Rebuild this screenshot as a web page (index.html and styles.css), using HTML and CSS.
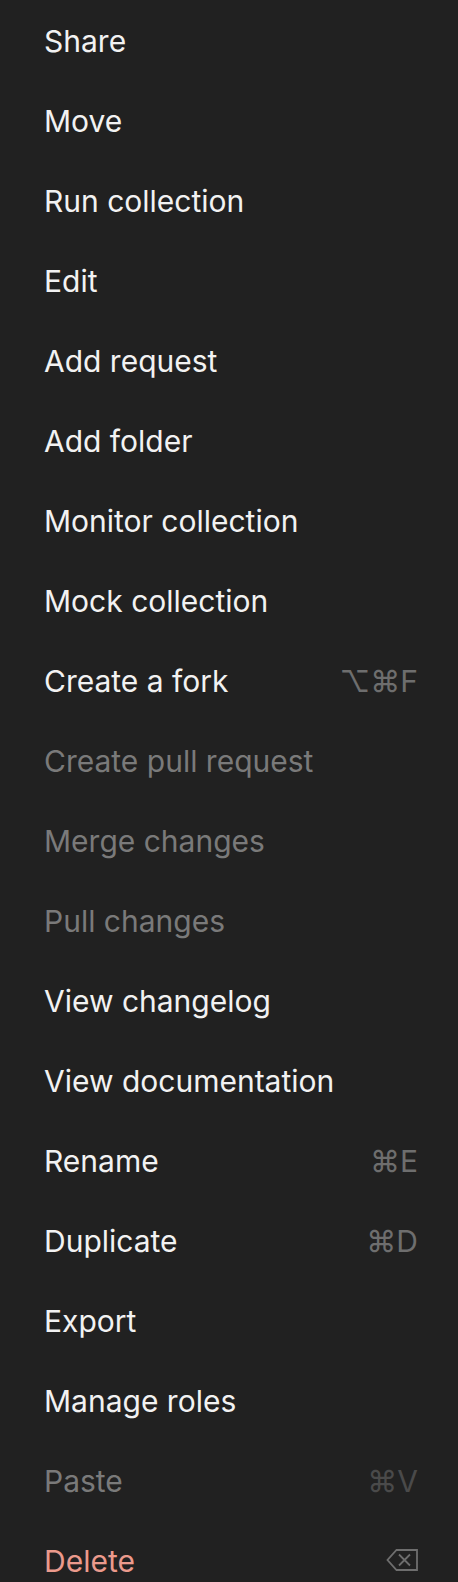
FILE: index.html
```html
<!DOCTYPE html>
<html lang="en">
<head>
  <meta charset="UTF-8">
  <meta name="viewport" content="width=device-width, initial-scale=1.0">
  <title>Collection menu</title>
  <link rel="stylesheet" href="styles.css">
</head>
<body>
  <ul class="menu">
    <li class="menu-item"><span class="label">Share</span></li>
    <li class="menu-item"><span class="label">Move</span></li>
    <li class="menu-item"><span class="label">Run collection</span></li>
    <li class="menu-item"><span class="label">Edit</span></li>
    <li class="menu-item"><span class="label">Add request</span></li>
    <li class="menu-item"><span class="label">Add folder</span></li>
    <li class="menu-item"><span class="label">Monitor collection</span></li>
    <li class="menu-item"><span class="label">Mock collection</span></li>
    <li class="menu-item"><span class="label">Create a fork</span><span class="shortcut">⌥⌘F</span></li>
    <li class="menu-item disabled"><span class="label">Create pull request</span></li>
    <li class="menu-item disabled"><span class="label">Merge changes</span></li>
    <li class="menu-item disabled"><span class="label">Pull changes</span></li>
    <li class="menu-item"><span class="label">View changelog</span></li>
    <li class="menu-item"><span class="label">View documentation</span></li>
    <li class="menu-item"><span class="label">Rename</span><span class="shortcut">⌘E</span></li>
    <li class="menu-item"><span class="label">Duplicate</span><span class="shortcut">⌘D</span></li>
    <li class="menu-item"><span class="label">Export</span></li>
    <li class="menu-item"><span class="label">Manage roles</span></li>
    <li class="menu-item disabled"><span class="label">Paste</span><span class="shortcut">⌘V</span></li>
    <li class="menu-item danger">
      <span class="label">Delete</span>
      <!-- backspace key -->
      <svg class="shortcut-icon" width="32" height="24" viewBox="0 0 32 24" fill="none" stroke="currentColor" stroke-width="1.8">
        <path d="M10.5 2H31V22H10.5L1.5 12Z"/>
        <path d="M13 6.5L24 17.5M24 6.5L13 17.5"/>
      </svg>
    </li>
  </ul>
</body>
</html>
```

FILE: styles.css
```css
html, body {
  margin: 0;
  padding: 0;
  background-color: #212121;
}
body {
  font-family: Inter, 'Noto Sans', sans-serif;
  color: #f2f2f2;
}
.menu {
  list-style: none;
  margin: 0;
  padding: 1px 0 0;
}
.menu-item {
  height: 80px;
  display: flex;
  align-items: center;
  justify-content: space-between;
  padding: 0 40px 0 44px;
  font-size: 30px;
  line-height: 1;
}
.shortcut {
  color: #6e6e6e;
}
.disabled .label {
  color: #7a7a7a;
}
.disabled .shortcut {
  color: #4a4a4a;
}
.danger .label {
  color: #eb9a8c;
}
.shortcut-icon {
  color: #6e6e6e;
  margin-bottom: 2px;
}
```
